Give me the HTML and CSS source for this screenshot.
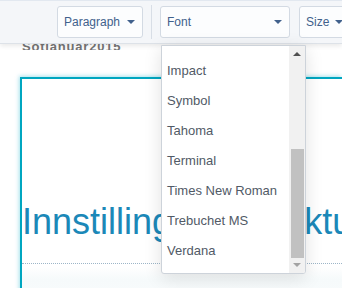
FILE: index.html
```html
<!DOCTYPE html>
<html lang="no">
<head>
<meta charset="utf-8">
<link rel="stylesheet" href="styles.css">
</head>
<body>
<div class="toolbar">
  <div class="btn btn-para"><span>Paragraph</span><i class="caret"></i></div>
  <div class="sep"></div>
  <div class="btn btn-font"><span>Font</span><i class="caret"></i></div>
  <div class="btn btn-size"><span>Size</span><i class="caret"></i></div>
</div>
<div class="strip"><span>Sotjanuar2015</span></div>
<div class="panel">
  <h1 class="title">Innstillinger – struktur</h1>
  <div class="rule"></div>
</div>
<div class="dropdown">
  <ul class="list">
    <li>Impact</li>
    <li>Symbol</li>
    <li>Tahoma</li>
    <li>Terminal</li>
    <li>Times New Roman</li>
    <li>Trebuchet MS</li>
    <li>Verdana</li>
  </ul>
  <div class="scroll">
    <div class="arrow up"></div>
    <div class="track"><div class="thumb"></div></div>
    <div class="arrow down"></div>
  </div>
</div>
</body>
</html>
```
FILE: styles.css
```css
html, body {
  margin: 0;
  padding: 0;
}
body {
  width: 342px;
  height: 288px;
  overflow: hidden;
  background: #fff;
  font-family: "Liberation Sans", Arial, sans-serif;
  position: relative;
}
.toolbar {
  position: relative;
  z-index: 2;
  box-sizing: border-box;
  height: 44px;
  background: #f4f6f9;
  border-top: 1px solid #e2e8f0;
  border-bottom: 1px solid #dde2e8;
  box-shadow: 0 2px 5px rgba(0, 0, 0, 0.09);
  display: flex;
  align-items: center;
  padding-left: 57px;
}
.btn {
  box-sizing: border-box;
  height: 32px;
  background: #fcfdfe;
  border: 1px solid #d3dae3;
  border-radius: 3px;
  display: flex;
  align-items: center;
  padding: 0 6px;
  color: #41618c;
  font-size: 12px;
  flex-shrink: 0;
}
.btn span {
  flex: 1;
}
.caret {
  width: 0;
  height: 0;
  border-left: 4px solid transparent;
  border-right: 4px solid transparent;
  border-top: 4px solid #41618c;
}
.btn-para {
  width: 86px;
}
.btn-para .caret {
  margin-right: 1px;
}
.sep {
  width: 1px;
  height: 34px;
  background: #d8dee6;
  margin: 0 8px 0 8px;
  flex-shrink: 0;
}
.btn-font {
  width: 130px;
}
.btn-font .caret {
  margin-right: 1px;
}
.btn-size {
  width: 60px;
  margin-left: 9px;
}
.btn-size span {
  flex: none;
  margin-right: 6px;
}
.strip {
  height: 6px;
  overflow: hidden;
  display: flex;
  align-items: flex-end;
  padding-left: 22px;
}
.strip span {
  display: block;
  font-size: 13px;
  font-weight: bold;
  letter-spacing: 0.8px;
  color: #747474;
  line-height: 6px;
}
.panel {
  margin: 27px 0 0 20px;
  border-top: 2px solid #00a6c0;
  border-left: 2px solid #00a6c0;
  box-shadow: -1px -1px 4px rgba(0, 170, 200, 0.35);
  height: 240px;
  background: linear-gradient(180deg, #fff 0, #fff 188px, #f6fafb 200px, #fafcfd 240px);
}
.title {
  margin: 0;
  padding-top: 121px;
  font-weight: normal;
  font-size: 36px;
  line-height: 43px;
  color: #1b88b8;
  white-space: nowrap;
}
.rule {
  margin-top: 20px;
  border-top: 1px dotted #9db6c8;
}
.dropdown {
  position: absolute;
  z-index: 3;
  left: 161px;
  top: 45px;
  width: 145px;
  height: 229px;
  box-sizing: border-box;
  background: #fff;
  border: 1px solid #cdd3da;
  border-radius: 0 0 3px 3px;
  box-shadow: 0 4px 18px rgba(0, 0, 0, 0.12);
  display: flex;
  overflow: hidden;
}
.list {
  list-style: none;
  margin: 0;
  padding: 10px 0 0 5px;
  flex: 1;
}
.list li {
  font-size: 13px;
  line-height: 30px;
  color: #515a66;
  white-space: nowrap;
}
.scroll {
  width: 16px;
  background: #f1f1f1;
  display: flex;
  flex-direction: column;
  align-items: center;
}
.arrow {
  width: 0;
  height: 0;
  border-left: 4px solid transparent;
  border-right: 4px solid transparent;
}
.arrow.up {
  margin-top: 6px;
  border-bottom: 4px solid #505050;
}
.arrow.down {
  margin-bottom: 6px;
  border-top: 4px solid #a3a3a3;
}
.track {
  flex: 1;
  width: 100%;
  display: flex;
  flex-direction: column;
  justify-content: flex-end;
  align-items: center;
  padding-bottom: 5px;
}
.thumb {
  width: 13px;
  height: 109px;
  background: #c1c1c1;
}
```
